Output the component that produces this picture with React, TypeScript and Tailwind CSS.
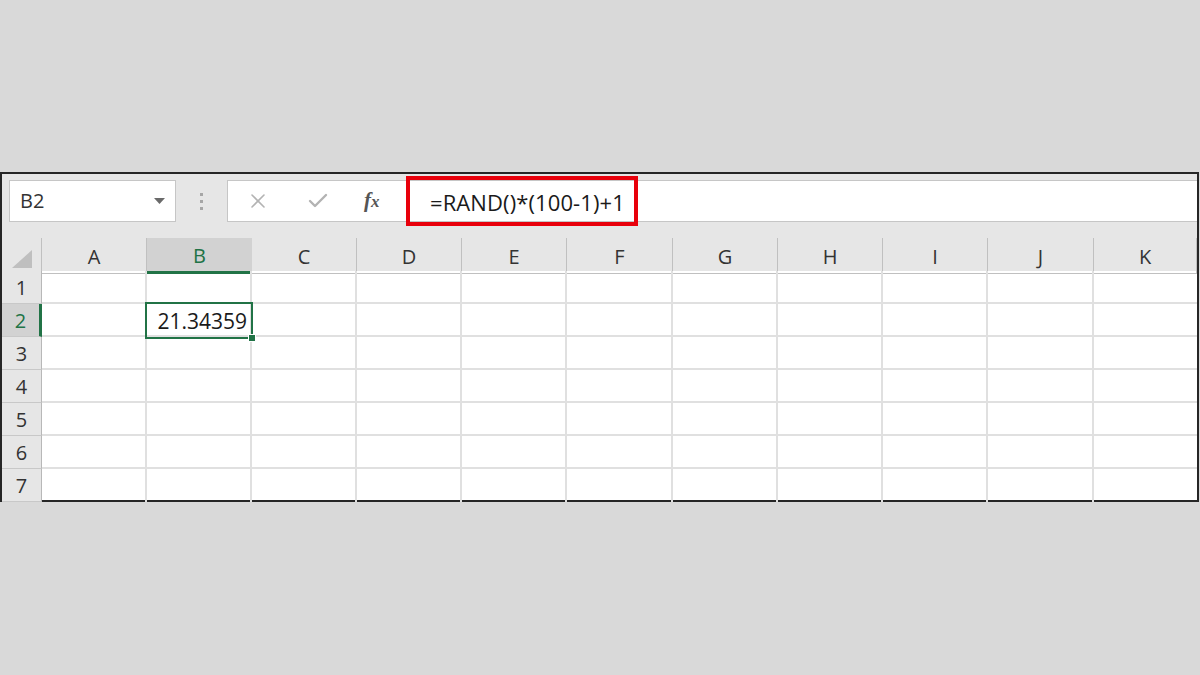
import { X, Check } from 'lucide-react';

const cols = ['A', 'B', 'C', 'D', 'E', 'F', 'G', 'H', 'I', 'J', 'K'];
const rows = [1, 2, 3, 4, 5, 6, 7];

const gridCols = 'grid-cols-[40px_105px_105px_105px_105px_105px_106px_105px_105px_105px_106px_1fr]';

export default function App() {
  return (
    <div
      className="h-[675px] w-[1200px] bg-[#d9d9d9] pt-[172px]"
      style={{ fontFamily: '"Open Sans", "Liberation Sans", sans-serif' }}
    >
      <div className="w-[1199px] border-2 border-[#262626] bg-white">
        {/* toolbar */}
        <div className="flex h-[64px] items-start bg-[#e6e6e6] pl-[7px] pt-[6px]">
          <div className="flex h-[42px] w-[167px] items-center justify-between border border-[#c6c6c6] bg-white pl-[10px] pr-[10px]">
            <span className="text-[20px] text-[#333]">B2</span>
            <svg width="11" height="7" viewBox="0 0 11 7">
              <path d="M0 0h11L5.5 6z" fill="#6a6a6a" />
            </svg>
          </div>
          <div className="flex h-[42px] w-[51px] flex-col items-center justify-center gap-[4px]">
            <span className="h-[3px] w-[3px] bg-[#a6a6a6]" />
            <span className="h-[3px] w-[3px] bg-[#a6a6a6]" />
            <span className="h-[3px] w-[3px] bg-[#a6a6a6]" />
          </div>
          <div className="flex h-[42px] flex-1 items-center border border-r-0 border-[#c6c6c6] bg-white">
            <div className="flex w-[178px] items-center">
              <X className="ml-[18px] h-[24px] w-[24px] text-[#b3b3b3]" strokeWidth={1.6} />
              <Check className="ml-[36px] h-[24px] w-[24px] text-[#b3b3b3]" strokeWidth={2.4} />
              <span
                className="ml-[34px] text-[21px] font-bold italic text-[#555]"
                style={{ fontFamily: '"Liberation Serif", serif' }}
              >
                f<span className="text-[17px]">x</span>
              </span>
            </div>
            <div className="relative flex h-full items-center">
              <div className="absolute -top-[5px] left-0 h-[50px] w-[232px] border-[4px] border-[#e8000b]" />
              <span className="pl-[24px] pt-[2px] text-[22px] tracking-[0.1px] text-[#1a1a1a]">=RAND()*(100-1)+1</span>
            </div>
          </div>
        </div>

        {/* column headers */}
        <div className={`grid h-[33px] bg-[#e6e6e6] ${gridCols}`}>
          <div className="flex items-end justify-center border-r border-b border-[#c0c0c0] pb-[5px] pt-[5px]">
            <svg width="20" height="18" viewBox="0 0 20 18">
              <path d="M20 0v18H0z" fill="#bfbfbf" />
            </svg>
          </div>
          {cols.map((c) => (
            <div
              key={c}
              className={
                c === 'B'
                  ? 'flex items-center justify-center border-b-[3px] border-[#217346] bg-[#d2d2d2] pt-[3px] text-[20px] text-[#217346]'
                  : 'flex items-center justify-center border-b border-r border-[#c0c0c0] pt-[2px] text-[20px] text-[#333]'
              }
            >
              {c}
            </div>
          ))}
        </div>

        {/* rows */}
        {rows.map((r) => (
          <div key={r} className={`grid ${r === 7 ? 'h-[31px]' : 'h-[33px]'} ${gridCols}`}>
            <div
              className={
                r === 2
                  ? 'flex items-center justify-center border-r-[3px] border-b border-r-[#217346] border-b-[#c8c8c8] bg-[#d2d2d2] pt-[2px] text-[20px] text-[#217346]'
                  : 'flex items-center justify-center border-r border-b border-r-[#b8b8b8] border-b-[#c8c8c8] bg-[#e6e6e6] pt-[2px] text-[20px] text-[#333]'
              }
            >
              {r}
            </div>
            {cols.map((c) => (
              <div
                key={c}
                className={`relative ${r === 7 ? '' : 'border-b-2'} ${c === 'K' ? '' : 'border-r-2'} border-[#e0e0e0]`}
              >
                {r === 2 && c === 'B' && (
                  <div className="absolute -left-[2px] -top-[2px] z-10 flex h-[37px] w-[108px] items-center justify-end border-2 border-[#217346] pr-[4px] pt-[2px] text-[21px] text-[#1a1a1a]">
                    21.34359
                    <span className="absolute -bottom-[5px] -right-[5px] h-[8px] w-[8px] border border-white bg-[#217346]" />
                  </div>
                )}
              </div>
            ))}
          </div>
        ))}
      </div>
    </div>
  );
}
